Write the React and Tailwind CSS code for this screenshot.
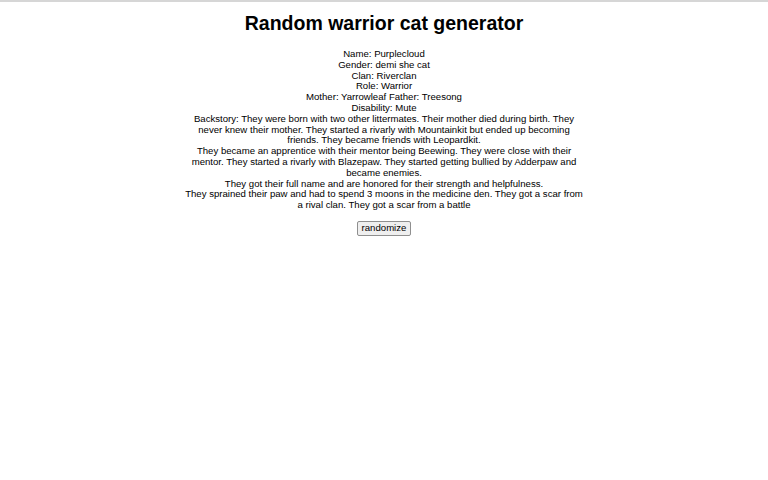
const cat = {
  name: 'Purplecloud',
  gender: 'demi she cat',
  clan: 'Riverclan',
  role: 'Warrior',
  mother: 'Yarrowleaf',
  father: 'Treesong',
  disability: 'Mute',
  backstory: [
    'Backstory: They were born with two other littermates. Their mother died during birth. They never knew their mother. They started a rivarly with Mountainkit but ended up becoming friends. They became friends with Leopardkit.',
    'They became an apprentice with their mentor being Beewing. They were close with their mentor. They started a rivarly with Blazepaw. They started getting bullied by Adderpaw and became enemies.',
    'They got their full name and are honored for their strength and helpfulness.',
    'They sprained their paw and had to spend 3 moons in the medicine den. They got a scar from a rival clan. They got a scar from a battle',
  ],
};

export default function App() {
  return (
    <div className="w-[768px] h-[480px] bg-white border-t-2 border-[#d6d6d6] font-['Liberation_Sans',Arial,sans-serif] text-black text-center overflow-hidden">
      <h1 className="mt-[9px] text-[19.5px] leading-[24px] font-bold">Random warrior cat generator</h1>

      <div className="mt-[14px] text-[9.6px] leading-[10.8px] flex flex-col items-center">
        <p>Name: {cat.name}</p>
        <p>Gender: {cat.gender}</p>
        <p>Clan: {cat.clan}</p>
        <p>Role: {cat.role}</p>
        <p>Mother: {cat.mother} Father: {cat.father}</p>
        <p>Disability: {cat.disability}</p>
        <div className="w-[400px]">
          {cat.backstory.map((line) => (
            <p key={line}>{line}</p>
          ))}
        </div>
      </div>

      <button className="mt-[10px] px-[4px] h-[15px] text-[9.6px] leading-[12px] bg-[#efefef] border border-[#8f8f8f] rounded-[2px]">
        randomize
      </button>
    </div>
  );
}
